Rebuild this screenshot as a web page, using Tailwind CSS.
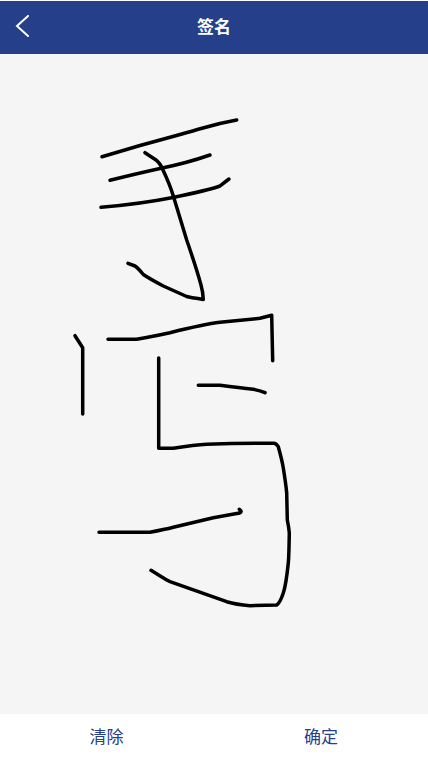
<!DOCTYPE html>
<html lang="zh">
<head>
<meta charset="utf-8">
<script src="https://cdn.jsdelivr.net/npm/@tailwindcss/browser@4"></script>
</head>
<body class="m-0 bg-white font-['Liberation_Sans','Noto_Sans_CJK_SC',sans-serif]">
<div class="flex h-[761px] w-[428px] flex-col overflow-hidden pt-px">
  <header class="relative flex h-[53px] shrink-0 items-center justify-center bg-[#253f8a]">
    <svg class="absolute left-[15px] top-[14px]" width="16" height="22" viewBox="0 0 16 22" fill="none" stroke="#fff" stroke-width="2" stroke-linecap="round" stroke-linejoin="miter"><path d="M13 1 L2 11 L13 21"/></svg>
    <h1 class="text-[17px] font-bold text-white">签名</h1>
  </header>
  <main class="h-[660px] shrink-0 bg-[#f5f5f5]">
    <svg class="block" width="428" height="660" viewBox="0 54 428 660" fill="none" stroke="#000" stroke-width="3.5" stroke-linecap="round" stroke-linejoin="round">
      <path d="M102 156.7 L140 145.5 Q186 133 203 128 Q220 123 236.7 120"/>
      <path d="M145 152.7 L156 160 Q160 163 163 170 Q170 185 173 195 L186.7 240 Q197 270 201 285 Q203 292 203.3 299.5 L198 298.5 Q192 298 186.7 296.5 L163.3 286 Q150 279 143.3 274.5 Q138 268 135 266 L128 263.3"/>
      <path d="M110 180.3 Q133 174.5 160 168.5 Q187 163 210 155"/>
      <path d="M101 207.3 Q140 204 173 197.5 Q207 190.5 220 186 Q225 182 229 179"/>
      <path d="M75 335.7 L82.7 347.7 L82.7 414"/>
      <path d="M108 339.3 L136.7 339.3 Q150 337 170 332.7 Q205 324 220 322.3 L260 318.3 L271.7 315.3 L272 330 L272.7 360.7"/>
      <path d="M158.7 358 L158.7 448.3 L173.3 448.3 Q195 445 206.7 444.3 Q240 443 273.3 443.3 Q276 443 278.3 446.7 Q282 460 283.3 468 Q286 485 286.7 493 L287.3 520 Q289 528 289.3 533 Q289 555 288.3 563 Q286 585 283.3 593 Q280 603 276.7 605 L250 605.7 Q236 604.5 226.7 601.7 L170 581.7 Q166 580 163 577.7 L151 570.3"/>
      <path d="M198.3 385.3 L220 385.3 Q240 388 253.3 389.3 Q260 390.5 265 392.7"/>
      <path d="M99 532.3 L150 532.3 Q165 529.5 173.3 527.3 L213.3 517.7 L236.7 513.5 Q241.5 513 241 511 L239.3 509.3"/>
    </svg>
  </main>
  <footer class="grid flex-1 grid-cols-2 bg-white text-[17px] text-[#253f8a]">
    <button class="flex items-center justify-center pr-[1px]">清除</button>
    <button class="flex items-center justify-center">确定</button>
  </footer>
</div>
</body>
</html>
